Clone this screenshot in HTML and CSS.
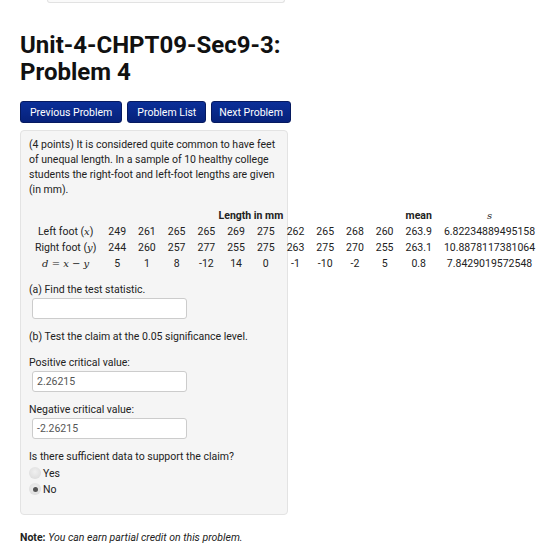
FILE: index.html
```html
<!DOCTYPE html>
<html>
<head>
<meta charset="utf-8">
<link rel="stylesheet" href="styles.css">
</head>
<body>
<div class="topbox"></div>
<h1 class="title">Unit-4-CHPT09-Sec9-3:<br>Problem 4</h1>
<div class="nav">
  <button class="btn">Previous Problem</button>
  <button class="btn">Problem List</button>
  <button class="btn">Next Problem</button>
</div>
<div class="problem">
  <p class="intro">(4 points) It is considered quite common to have feet of unequal length. In a sample of 10 healthy college students the right-foot and left-foot lengths are given (in mm).</p>
  <table class="data">
    <tr class="head"><td></td><td colspan="10" class="len">Length in mm</td><td class="b">mean</td><td class="m">s</td></tr>
    <tr><td class="lbl">Left foot (<i class="m">x</i>)</td><td>249</td><td>261</td><td>265</td><td>265</td><td>269</td><td>275</td><td>262</td><td>265</td><td>268</td><td>260</td><td>263.9</td><td>6.82234889495158</td></tr>
    <tr><td class="lbl">Right foot (<i class="m">y</i>)</td><td>244</td><td>260</td><td>257</td><td>277</td><td>255</td><td>275</td><td>263</td><td>275</td><td>270</td><td>255</td><td>263.1</td><td>10.8878117381064</td></tr>
    <tr><td class="lbl m"><i>d</i> = <i>x</i> − <i>y</i></td><td>5</td><td>1</td><td>8</td><td>-12</td><td>14</td><td>0</td><td>-1</td><td>-10</td><td>-2</td><td>5</td><td>0.8</td><td>7.8429019572548</td></tr>
  </table>
  <p class="q">(a) Find the test statistic.</p>
  <div class="field"></div>
  <p class="q">(b) Test the claim at the 0.05 significance level.</p>
  <p class="q">Positive critical value:</p>
  <div class="field">2.26215</div>
  <p class="q">Negative critical value:</p>
  <div class="field">-2.26215</div>
  <p class="q">Is there sufficient data to support the claim?</p>
  <div class="radios">
    <div class="opt"><span class="radio"></span>Yes</div>
    <div class="opt"><span class="radio on"></span>No</div>
  </div>
</div>
<p class="note"><b>Note:</b> <i>You can earn partial credit on this problem.</i></p>
</body>
</html>
```
FILE: styles.css
```css
* { box-sizing: border-box; }
html, body { margin: 0; padding: 0; background: #fff; }
body {
  font-family: Roboto, "Liberation Sans", sans-serif;
  color: #222;
  padding: 0 20px;
  width: 540px;
}
.topbox {
  margin-left: 27px;
  width: 238px;
  height: 3px;
  border: 1px solid #e2e2e2;
  border-top: none;
  border-radius: 0 0 3px 3px;
  background: #fafafa;
}
.title {
  margin: 29px 0 0 0;
  font-size: 24px;
  line-height: 27px;
  font-weight: 700;
  color: #111;
}
.nav {
  display: flex;
  gap: 5px;
  margin-top: 15px;
}
.btn {
  font-family: Roboto, "Liberation Sans", sans-serif;
  font-size: 10.5px;
  color: #fff;
  background: linear-gradient(#0b2f98, #06217a);
  border: 1px solid #061a60;
  border-radius: 3px;
  height: 22px;
  padding: 0 9px;
  margin: 0;
}
.btn:last-child { padding: 0 7px; }
.problem {
  margin-top: 7px;
  width: 268px;
  background: #f5f5f5;
  border: 1px solid #e3e3e3;
  border-radius: 4px;
  padding: 6px 0 17px 8px;
  font-size: 10.5px;
  color: #222;
}
.intro {
  margin: 0;
  line-height: 15px;
  padding-right: 10px;
}
.data {
  border-collapse: collapse;
  margin-top: 11px;
  margin-bottom: 3px;
  font-size: 10.5px;
  white-space: nowrap;
}
.data td {
  padding: 0 6px;
  text-align: center;
  height: 16px;
}
.data .head td { height: 15px; }
.data .len { text-align: center; font-weight: 700; }
.data .b { font-weight: 700; }
.m { font-family: "DejaVu Serif", "Liberation Serif", serif; font-style: italic; font-size: 10px; }
.lbl { padding-left: 0; }
.lbl.m { font-style: normal; }
.q { margin: 12px 0 0 0; line-height: 14px; }
.field + .q { margin-top: 11px; }
.field {
  margin-top: 1px;
  margin-left: 3px;
  width: 155px;
  height: 21px;
  background: #fff;
  border: 1px solid #ccc;
  border-radius: 3px;
  padding: 4px 4px;
  color: #555;
  line-height: 12px;
}
.radios { margin-top: 1px; }
.opt { display: flex; align-items: center; height: 16px; }
.radio {
  width: 12px; height: 12px;
  border-radius: 50%;
  background: radial-gradient(circle at 50% 40%, #f0f0f0, #d8d8d8);
  margin-right: 2px;
  display: inline-flex;
  align-items: center;
  justify-content: center;
}
.radio.on::after {
  content: "";
  width: 5px; height: 5px;
  border-radius: 50%;
  background: #555;
}
.note { margin: 16px 0 0 0; font-size: 10.5px; }
```
